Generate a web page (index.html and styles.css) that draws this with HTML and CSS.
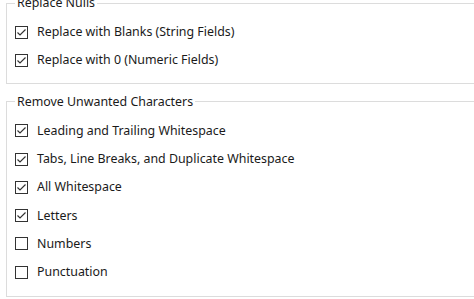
FILE: index.html
```html
<!DOCTYPE html>
<html>
<head>
<meta charset="utf-8">
<link rel="stylesheet" href="styles.css">
</head>
<body>
<fieldset class="group group-first">
  <legend>Replace Nulls</legend>
  <label class="row"><span class="box checked"><svg viewBox="0 0 11 11"><polyline points="1.5,5.5 4,8 9.5,2.5"/></svg></span><span class="txt">Replace with Blanks (String Fields)</span></label>
  <label class="row"><span class="box checked"><svg viewBox="0 0 11 11"><polyline points="1.5,5.5 4,8 9.5,2.5"/></svg></span><span class="txt">Replace with 0 (Numeric Fields)</span></label>
</fieldset>
<fieldset class="group group-second">
  <legend>Remove Unwanted Characters</legend>
  <label class="row"><span class="box checked"><svg viewBox="0 0 11 11"><polyline points="1.5,5.5 4,8 9.5,2.5"/></svg></span><span class="txt">Leading and Trailing Whitespace</span></label>
  <label class="row"><span class="box checked"><svg viewBox="0 0 11 11"><polyline points="1.5,5.5 4,8 9.5,2.5"/></svg></span><span class="txt">Tabs, Line Breaks, and Duplicate Whitespace</span></label>
  <label class="row"><span class="box checked"><svg viewBox="0 0 11 11"><polyline points="1.5,5.5 4,8 9.5,2.5"/></svg></span><span class="txt">All Whitespace</span></label>
  <label class="row"><span class="box checked"><svg viewBox="0 0 11 11"><polyline points="1.5,5.5 4,8 9.5,2.5"/></svg></span><span class="txt">Letters</span></label>
  <label class="row"><span class="box"></span><span class="txt">Numbers</span></label>
  <label class="row"><span class="box"></span><span class="txt">Punctuation</span></label>
</fieldset>
</body>
</html>
```
FILE: styles.css
```css
html, body {
  margin: 0;
  padding: 0;
  background: #ffffff;
  overflow: hidden;
}
body {
  width: 474px;
  height: 299px;
  font-family: "Noto Sans", "Open Sans", sans-serif;
  font-size: 12.4px;
  color: #1a1a1a;
}
.group {
  border: 1px solid #dcdcdc;
  margin: 0 -30px 0 6px;
  padding: 8px 0 8px 8px;
  min-width: 0;
  display: flex;
  flex-direction: column;
}
.group-first {
  margin-top: -4px;
}
.group-second {
  margin-top: 11px;
  padding-bottom: 10px;
}
legend {
  padding: 0 2px;
  line-height: 14px;
  height: 14px;
}
.row {
  display: flex;
  align-items: center;
  height: 28.3px;
}
.box {
  box-sizing: border-box;
  width: 13px;
  height: 13px;
  border: 1px solid #333333;
  background: #ffffff;
  flex: none;
  display: flex;
}
.box svg {
  width: 11px;
  height: 11px;
  fill: none;
  stroke: #333333;
  stroke-width: 1.2;
}
.txt {
  margin-left: 9px;
  line-height: 14px;
}
```
